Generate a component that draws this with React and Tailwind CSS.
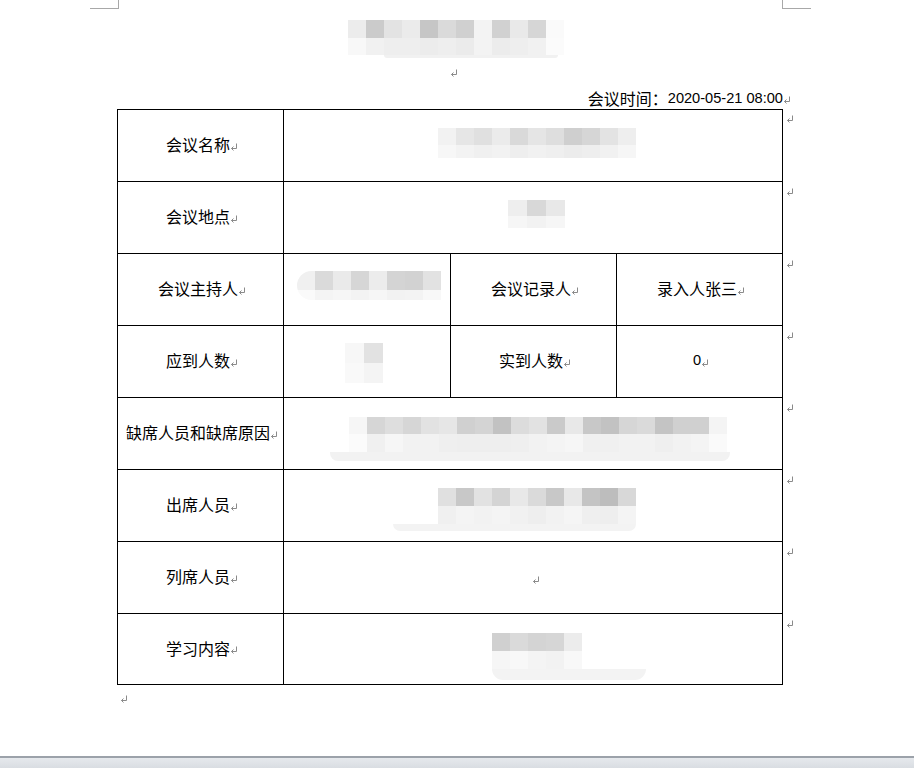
import React from 'react'

const Mark = ({ className = '' }) => (
  <svg width="8" height="8" viewBox="0 0 8 8" className={`shrink-0 ${className}`}>
    <path d="M6.5 0.5V5.5H1.5" fill="none" stroke="#8a8a8a" strokeWidth="1" />
    <path d="M3.5 3.5L1.5 5.5L3.5 7.5" fill="none" stroke="#8a8a8a" strokeWidth="1" />
  </svg>
)

// pixelated blur patch, like the redacted text in the screenshot
const Blur = ({ top, bottom, bw, h1, h2, tail, className = '' }) => (
  <div className={`flex flex-col ${className}`}>
    <div className="flex">
      {top.map((c, i) => (
        <div key={i} className={`${bw} ${h1} ${c}`} />
      ))}
    </div>
    <div className="flex">
      {bottom.map((c, i) => (
        <div key={i} className={`${bw} ${h2} ${c}`} />
      ))}
    </div>
    {tail && <div className={tail} />}
  </div>
)

const Label = ({ children }) => (
  <div className="flex items-center justify-center h-full pl-[3px] pb-[3px]">
    <span className="text-[16px] leading-[20px]">{children}</span>
    <Mark className="mt-[5px]" />
  </div>
)

const Row = ({ first, last, children }) => (
  <div className="flex">
    <div className={`w-[666px] flex border-l border-b border-black ${first ? 'border-t h-[73px]' : last ? 'h-[71px]' : 'h-[72px]'}`}>
      {children}
    </div>
    <Mark className="ml-[3px] mt-[6px]" />
  </div>
)

const LabelCell = ({ children }) => (
  <div className="w-[166px] h-full border-r border-black">
    <Label>{children}</Label>
  </div>
)

const Wide = ({ children, className = '' }) => (
  <div className={`w-[499px] h-full border-r border-black flex ${className}`}>{children}</div>
)

const App = () => {
  return (
    <div className="w-[914px] h-[768px] bg-white flex flex-col overflow-hidden text-black font-['Noto_Sans_CJK_SC',sans-serif]">
      <div className="flex-1 flex flex-col">
        {/* page corner marks */}
        <div className="flex h-[9px]">
          <div className="ml-[90px] w-[29px] h-[9px] border-r border-b border-[#a8a8a8]" />
          <div className="ml-[663px] w-[29px] h-[9px] border-l border-b border-[#a8a8a8]" />
        </div>

        <div className="ml-[117px] w-[680px] flex flex-col">
          {/* title (blurred) */}
          <Blur
            className="ml-[231px] mt-[11px]"
            bw="w-[18px]"
            h1="h-[18px]"
            h2="h-[17px]"
            top={['bg-[#ececec]', 'bg-[#cbcbcb]', 'bg-[#e3e3e3]', 'bg-[#ebebeb]', 'bg-[#c6c6c6]', 'bg-[#dadada]', 'bg-[#d0d0d0]', 'bg-[#f3f3f3]', 'bg-[#d1d1d1]', 'bg-[#e9e9e9]', 'bg-[#d6d6d6]', 'bg-[#fafafa]']}
            bottom={['bg-[#f8f8f8]', 'bg-[#f1f1f1]', 'bg-[#eeeeee]', 'bg-[#eeeeee]', 'bg-[#ececec]', 'bg-[#eeeeee]', 'bg-[#ebebeb]', 'bg-[#f3f3f3]', 'bg-[#ececec]', 'bg-[#eeeeee]', 'bg-[#f1f1f1]', 'bg-[#fbfbfb]']}
            tail="ml-[36px] w-[174px] h-[3px] rounded-b-[6px] bg-[#f1f1f1]"
          />
          <Mark className="ml-[333px] mt-[11px]" />

          {/* meeting time */}
          <div className="w-[674px] flex justify-end items-center h-[20px] mt-[11px]">
            <span className="text-[16px] leading-[20px]">会议时间：</span>
            <span className="text-[14.6px] leading-[20px] font-['Liberation_Sans',sans-serif]">2020-05-21 08:00</span>
            <Mark className="mt-[4px]" />
          </div>

          {/* table */}
          <div className="flex flex-col mt-[1px]">
            <Row first>
              <LabelCell>会议名称</LabelCell>
              <Wide className="pl-[154px] pt-[18px]">
                <Blur
                  bw="w-[18px]"
                  h1="h-[17px]"
                  h2="h-[13px]"
                  top={['bg-[#f2f2f2]', 'bg-[#e6e6e6]', 'bg-[#e0e0e0]', 'bg-[#ebebeb]', 'bg-[#d9d9d9]', 'bg-[#e5e5e5]', 'bg-[#dedede]', 'bg-[#cfcfcf]', 'bg-[#d6d6d6]', 'bg-[#e3e3e3]', 'bg-[#eeeeee]']}
                  bottom={['bg-[#f7f7f7]', 'bg-[#f3f3f3]', 'bg-[#f0f0f0]', 'bg-[#f2f2f2]', 'bg-[#eeeeee]', 'bg-[#f1f1f1]', 'bg-[#efefef]', 'bg-[#ececec]', 'bg-[#eeeeee]', 'bg-[#f1f1f1]', 'bg-[#f6f6f6]']}
                />
              </Wide>
            </Row>

            <Row>
              <LabelCell>会议地点</LabelCell>
              <Wide className="pl-[224px] pt-[18px]">
                <Blur
                  bw="w-[19px]"
                  h1="h-[16px]"
                  h2="h-[12px]"
                  top={['bg-[#eeeeee]', 'bg-[#d8d8d8]', 'bg-[#e8e8e8]']}
                  bottom={['bg-[#f6f6f6]', 'bg-[#f2f2f2]', 'bg-[#f6f6f6]']}
                />
              </Wide>
            </Row>

            <Row>
              <LabelCell>会议主持人</LabelCell>
              <div className="w-[167px] h-full border-r border-black pl-[13px] pt-[17px]">
                <Blur
                  className="rounded-l-full overflow-hidden"
                  bw="w-[18px]"
                  h1="h-[19px]"
                  h2="h-[10px]"
                  top={['bg-[#f0f0f0]', 'bg-[#dadada]', 'bg-[#eaeaea]', 'bg-[#d6d6d6]', 'bg-[#ececec]', 'bg-[#d4d4d4]', 'bg-[#d2d2d2]', 'bg-[#e2e2e2]']}
                  bottom={['bg-[#fafafa]', 'bg-[#f4f4f4]', 'bg-[#f6f6f6]', 'bg-[#f3f3f3]', 'bg-[#f6f6f6]', 'bg-[#f2f2f2]', 'bg-[#f3f3f3]', 'bg-[#f8f8f8]']}
                />
              </div>
              <LabelCell>会议记录人</LabelCell>
              <LabelCell>录入人张三</LabelCell>
            </Row>

            <Row>
              <LabelCell>应到人数</LabelCell>
              <div className="w-[167px] h-full border-r border-black pl-[61px] pt-[17px]">
                <Blur
                  bw="w-[19px]"
                  h1="h-[20px]"
                  h2="h-[20px]"
                  top={['bg-[#f7f7f7]', 'bg-[#e2e2e2]']}
                  bottom={['bg-[#f9f9f9]', 'bg-[#f4f4f4]']}
                />
              </div>
              <LabelCell>实到人数</LabelCell>
              <div className="w-[166px] h-full border-r border-black flex items-center justify-center pl-[3px] pb-[3px]">
                <span className="text-[14.6px] leading-[20px] font-['Liberation_Sans',sans-serif]">0</span>
                <Mark className="mt-[5px]" />
              </div>
            </Row>

            <Row>
              <LabelCell>缺席人员和缺席原因</LabelCell>
              <Wide className="pl-[46px] pt-[19px]">
                <Blur
                  className="pl-[19px]"
                  bw="w-[18px]"
                  h1="h-[17px]"
                  h2="h-[18px]"
                  top={['bg-[#f6f6f6]', 'bg-[#d6d6d6]', 'bg-[#dedede]', 'bg-[#d6d6d6]', 'bg-[#e2e2e2]', 'bg-[#e6e6e6]', 'bg-[#d0d0d0]', 'bg-[#d4d4d4]', 'bg-[#c2c2c2]', 'bg-[#dcdcdc]', 'bg-[#e2e2e2]', 'bg-[#cacaca]', 'bg-[#e8e8e8]', 'bg-[#c8c8c8]', 'bg-[#c2c2c2]', 'bg-[#d6d6d6]', 'bg-[#dadada]', 'bg-[#c4c4c4]', 'bg-[#d0d0d0]', 'bg-[#d0d0d0]', 'bg-[#f4f4f4]']}
                  bottom={['bg-[#fbfbfb]', 'bg-[#f0f0f0]', 'bg-[#f6f6f6]', 'bg-[#f2f2f2]', 'bg-[#f2f2f2]', 'bg-[#efefef]', 'bg-[#eeeeee]', 'bg-[#eeeeee]', 'bg-[#eeeeee]', 'bg-[#efefef]', 'bg-[#f2f2f2]', 'bg-[#f4f4f4]', 'bg-[#f6f6f6]', 'bg-[#f0f0f0]', 'bg-[#f0f0f0]', 'bg-[#f2f2f2]', 'bg-[#f2f2f2]', 'bg-[#efefef]', 'bg-[#f2f2f2]', 'bg-[#f4f4f4]', 'bg-[#fafafa]']}
                  tail="w-[400px] h-[9px] -ml-[19px] rounded-b-[8px] bg-[#f2f2f2]"
                />
              </Wide>
            </Row>

            <Row>
              <LabelCell>出席人员</LabelCell>
              <Wide className="pl-[109px] pt-[18px]">
                <Blur
                  className="pl-[45px]"
                  bw="w-[18px]"
                  h1="h-[18px]"
                  h2="h-[18px]"
                  top={['bg-[#e0e0e0]', 'bg-[#c8c8c8]', 'bg-[#e2e2e2]', 'bg-[#d4d4d4]', 'bg-[#e8e8e8]', 'bg-[#dadada]', 'bg-[#c8c8c8]', 'bg-[#e8e8e8]', 'bg-[#c4c4c4]', 'bg-[#bdbdbd]', 'bg-[#d8d8d8]']}
                  bottom={['bg-[#f0f0f0]', 'bg-[#f4f4f4]', 'bg-[#f2f2f2]', 'bg-[#f4f4f4]', 'bg-[#f1f1f1]', 'bg-[#eeeeee]', 'bg-[#f2f2f2]', 'bg-[#f5f5f5]', 'bg-[#efefef]', 'bg-[#eeeeee]', 'bg-[#f4f4f4]']}
                  tail="w-[243px] h-[7px] -ml-[45px] rounded-b-[8px] bg-[#f3f3f3]"
                />
              </Wide>
            </Row>

            <Row>
              <LabelCell>列席人员</LabelCell>
              <Wide className="items-center justify-center pl-[6px]">
                <Mark className="mt-[4px]" />
              </Wide>
            </Row>

            <Row last>
              <LabelCell>学习内容</LabelCell>
              <Wide className="pl-[176px] pt-[19px]">
                <Blur
                  className="pl-[32px]"
                  bw="w-[18px]"
                  h1="h-[18px]"
                  h2="h-[18px]"
                  top={['bg-[#d0d0d0]', 'bg-[#dadada]', 'bg-[#d4d4d4]', 'bg-[#d6d6d6]', 'bg-[#ececec]']}
                  bottom={['bg-[#f6f6f6]', 'bg-[#f8f8f8]', 'bg-[#f4f4f4]', 'bg-[#f2f2f2]', 'bg-[#f8f8f8]']}
                  tail="w-[154px] h-[11px] rounded-b-[14px] bg-[#f3f3f3]"
                />
              </Wide>
            </Row>
          </div>

          <Mark className="ml-[3px] mt-[10px]" />
        </div>
      </div>

      {/* window status strip */}
      <div className="h-[12px] border-t-2 border-[#9ca2aa] bg-gradient-to-b from-[#e6e9ed] to-[#d9dde2]" />
    </div>
  )
}

export default App
